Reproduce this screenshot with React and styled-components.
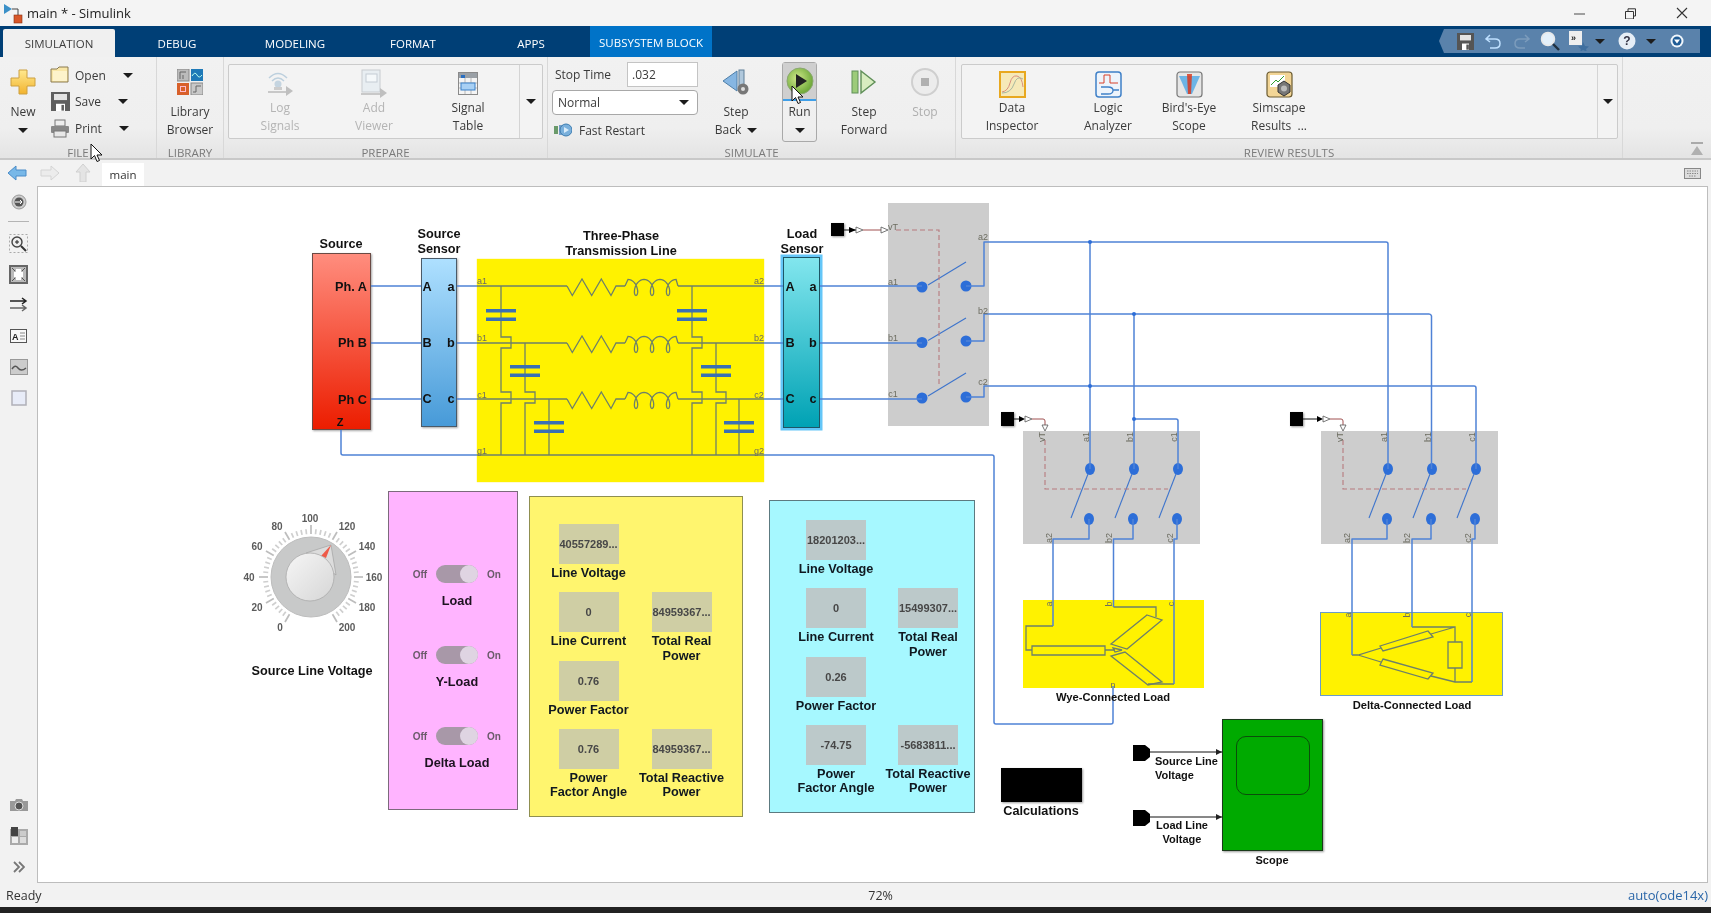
import React from "react";
import styled, { createGlobalStyle } from "styled-components";

const OX = 37;
const OY = 186;
const UI = `"Open Sans", "Noto Sans", sans-serif`;
const LAB = `"Liberation Sans", Arial, sans-serif`;

const Global = createGlobalStyle`
  html, body { margin: 0; padding: 0; background: #f2f2f2; overflow: hidden; }
  * { box-sizing: border-box; }
`;

const Root = styled.div`
  position: relative; width: 1711px; height: 913px; display: flex; flex-direction: column;
  font-family: ${UI}; font-size: 12px; color: #3a3a3a; filter: blur(0.35px); overflow: hidden;
`;

/* ---------- title bar ---------- */
const TitleBar = styled.div`
  height: 26px; display: flex; align-items: center; padding-left: 3px; background: #f4f4f4;
`;
const TitleText = styled.span`margin-left: 4px; font-size: 13px; color: #222; line-height: 1;`;
const WinControls = styled.div`margin-left: auto; display: flex; align-items: center; padding-right: 23px; gap: 40px;`;

/* ---------- tabs ---------- */
const TabBar = styled.div`
  height: 31px; background: #003f76; display: flex; padding-left: 3px; align-items: flex-end;
`;
const Tab = styled.div`
  width: ${p => p.$w || 118}px; height: ${p => (p.$context ? 31 : 28)}px; margin-right: ${p => p.$mr || 0}px;
  display: flex; align-items: center; justify-content: center; font-size: 11.5px;
  padding-top: ${p => (p.$context ? 1 : 0)}px;
  color: ${p => (p.$active ? "#3c3c3c" : "#fff")};
  background: ${p => (p.$active ? "#f0f0f0" : p.$context ? "#0073c8" : "transparent")};
  border-radius: ${p => (p.$active ? "2px 2px 0 0" : "0")};
`;
const QuickAccess = styled.div`
  margin-left: auto; margin-right: 11px; margin-bottom: 4px; width: 261px; height: 24px; background: #5a82ab;
  clip-path: polygon(0 50%, 5px 0, 100% 0, 100% 100%, 5px 100%);
  display: flex; align-items: center; padding-left: 17px;
`;
const QuickSlot = styled.span`
  width: ${p => p.$w || 29}px; display: flex; align-items: center; justify-content: center;
`;

/* ---------- ribbon ---------- */
const Ribbon = styled.div`
  height: 103px; display: flex; border-bottom: 2px solid #c8c8c8;
  background: linear-gradient(#f1f1f1 0%, #efefef 70%, #e4e4e4 100%);
`;
const Section = styled.div`
  width: ${p => p.$w}px; display: flex; flex-direction: column; border-right: 1px solid #d8d8d8;
`;
const SectionBody = styled.div`
  height: 90px; display: flex; padding-left: ${p => p.$pl || 0}px; align-items: flex-start;
`;
const SectionLabel = styled.div`
  height: 11px; line-height: 11px; text-align: center; font-size: 11.5px; color: #7a7a7a;
`;
const Tool = styled.div`
  width: ${p => p.$w}px; padding-top: 10px; display: flex; flex-direction: column; align-items: center;
  line-height: 18px; color: ${p => (p.$off ? "#aeaeae" : "#3a3a3a")}; text-align: center; flex: none;
`;
const ToolIcon = styled.div`
  height: 30px; margin-bottom: 6px; display: flex; align-items: center; justify-content: center;
`;
const Gallery = styled.div`
  margin: 7px 0 0 ${p => p.$ml}px; width: ${p => p.$w}px; height: 75px; display: flex;
  border: 1px solid #cbcbcb; border-radius: 2px; background: #f3f3f3;
`;
const GalleryItems = styled.div`flex: 1; display: flex; padding-left: ${p => p.$pl || 0}px;`;
const GalleryMore = styled.div`
  width: ${p => p.$w}px; border-left: 1px solid #d4d4d4; display: flex; align-items: center; justify-content: center;
`;
const GalleryTool = styled.div`
  width: ${p => p.$w}px; padding-top: 4px; display: flex; flex-direction: column; align-items: center;
  line-height: 18px; text-align: center; color: ${p => (p.$off ? "#b4b4b4" : "#3a3a3a")};
`;
const GalleryIcon = styled.div`height: 30px; display: flex; align-items: center; justify-content: center;`;
const Caret = styled.span`
  display: inline-block; width: 0; height: 0; border-left: 5px solid transparent; border-right: 5px solid transparent;
  border-top: 5px solid #1c1c1c; margin-left: ${p => p.$ml || 0}px; flex: none;
`;
const CaretLine = styled.div`height: 18px; display: flex; align-items: center; justify-content: center;`;
const FileRows = styled.div`padding: 5px 0 0 10px; display: flex; flex-direction: column;`;
const FileRow = styled.div`height: 26.5px; display: flex; align-items: center;`;
const FileIcon = styled.span`width: 20px; margin-right: 5px; display: flex; justify-content: center;`;
const SimColumn = styled.div`
  width: 146px; padding-top: 5px; display: flex; flex-direction: column; gap: 3px; flex: none;
`;
const StopRow = styled.div`display: flex; align-items: center; justify-content: space-between; height: 25px; padding-left: 3px;`;
const StopInput = styled.div`
  width: 71px; height: 25px; background: #fff; border: 1px solid #c4c4c4; padding-left: 4px; line-height: 23px;
`;
const ModeSelect = styled.div`
  height: 25px; background: #fff; border: 1px solid #a8a8a8; border-radius: 4px; padding: 0 8px 0 5px;
  display: flex; align-items: center; justify-content: space-between;
`;
const FastRow = styled.div`height: 24px; display: flex; align-items: center; gap: 7px; padding-left: 2px;`;
const RunBox = styled.div`
  width: 35px; height: 80px; margin: 5px 0 0 8px; border: 1px solid #a9a9a9; border-radius: 3px; flex: none;
  display: flex; flex-direction: column; align-items: center; line-height: 18px;
`;
const RunTop = styled.div`
  width: 100%; height: 38px; background: #cfcfcf; border-bottom: 2px solid #3f9fe8; flex: none; margin-bottom: 2px;
  display: flex; align-items: center; justify-content: center;
`;
const TailSection = styled.div`flex: 1; position: relative; display: flex; justify-content: flex-end; align-items: flex-end; padding: 0 7px 2px 0;`;

/* ---------- breadcrumb strip ---------- */
const Strip = styled.div`
  height: 26px; display: flex; align-items: flex-end; background: #f2f2f2; padding-left: 7px;
`;
const NavSlot = styled.span`width: 33px; height: 26px; display: flex; align-items: center; justify-content: flex-start;`;
const ModelTab = styled.div`
  width: 42px; height: 23px; background: #fff; margin-left: -4px; font-size: 11.5px; line-height: 24px; text-align: center; color: #333;
`;
const StripEnd = styled.span`margin-left: auto; height: 26px; display: flex; align-items: center; padding-right: 10px;`;

/* ---------- main ---------- */
const Main = styled.div`height: 697px; display: flex;`;
const LeftBar = styled.div`
  width: 37px; display: flex; flex-direction: column; align-items: center; padding: 5px 0 5px; background: #f2f2f2; flex: none;
`;
const LeftBtn = styled.div`
  width: 22px; height: 22px; display: flex; align-items: center; justify-content: center; margin-bottom: ${p => p.$mb ?? 9}px;
  &:last-child { margin-bottom: 0; }
`;
const LeftSep = styled.div`width: 21px; height: 1px; background: #b4b4b4; margin: -1px 0 10px;`;
const LeftSpacer = styled.div`flex: 1;`;
const Canvas = styled.div`
  position: relative; width: 1671px; height: 697px; background: #fff; box-shadow: inset 0 0 0 1px #bdbdbd; overflow: hidden;
`;

const Node = styled.div`
  position: absolute; left: ${p => p.$x - OX}px; top: ${p => p.$y - OY}px; width: ${p => p.$w}px; height: ${p => p.$h}px;
`;
const SourceBlock = styled(Node)`
  background: linear-gradient(#ff8d7e, #ec1d00); border: 1px solid #6a4a44; box-shadow: 1px 1px 2px rgba(0,0,0,.35);
`;
const SensorBlock = styled(Node)`
  background: linear-gradient(#aee0ff, #479ad8); border: 1px solid #4a5a68; box-shadow: 1px 1px 2px rgba(0,0,0,.35);
`;
const LoadSensorBlock = styled(Node)`
  background: linear-gradient(#82e6ee, #00a2b4); border: 1.5px solid #1d5666; box-shadow: 0 0 0 2.5px #64c6f8;
`;
const YellowBlock = styled(Node)`
  background: #fff200; box-shadow: ${p => (p.$soft ? "0 0 1px #ffe000" : "none")};
  border: ${p => (p.$line ? "1.5px solid #6a9cc8" : "none")};
`;
const SwitchBlock = styled(Node)`background: #cdcdcd;`;
const PanelPink = styled(Node)`
  background: #ffb4ff; border: 1px solid #7c6a7c; display: flex; flex-direction: column; align-items: center;
  padding: 73px 0 0 8px; gap: 37px;
`;
const ToggleGroup = styled.div`display: flex; flex-direction: column; align-items: center;`;
const ToggleRow = styled.div`display: flex; align-items: center; gap: 8px; height: 18px;`;
const ToggleSide = styled.span`width: 16px; text-align: center; font: bold 10px ${LAB}; color: #6a5a6a;`;
const ToggleTrack = styled.span`
  position: relative; width: 42px; height: 18px; border-radius: 9px; background: #a898a8; display: block;
`;
const ToggleKnob = styled.span`
  position: absolute; right: 0; top: 0; width: 18px; height: 18px; border-radius: 50%; background: #dfd4e2;
`;
const ToggleLabel = styled.div`
  margin-top: 10px; font: bold 12.7px/16px ${LAB}; color: #1d1320; white-space: nowrap;
`;
const ReadoutPanel = styled(Node)`
  background: ${p => p.$bg}; border: 1px solid ${p => p.$edge};
  display: grid; grid-template-columns: ${p => p.$col}px ${p => p.$col}px; grid-auto-rows: 68.3px;
  padding: ${p => p.$pt}px 0 0 ${p => p.$pl}px;
`;
const ReadoutCell = styled.div`display: flex; flex-direction: column; align-items: center;`;
const ReadoutValue = styled.div`
  width: 60px; height: 40px; flex: none; background: ${p => p.$bg}; display: flex; align-items: center; justify-content: center;
  font: bold 11px ${LAB}; color: #474747; white-space: nowrap;
`;
const ReadoutName = styled.div`
  margin-top: 2px; font: bold 12.7px/14.5px ${LAB}; color: #101820; text-align: center; white-space: pre;
`;
const BlackBox = styled(Node)`background: #000; box-shadow: 1px 1px 2px rgba(0,0,0,.4);`;
const ScopeBlock = styled(Node)`
  background: #00aa00; border: 1px solid #1a3a1a; box-shadow: 1px 1px 2px rgba(0,0,0,.4);
`;
const ScopeScreen = styled.div`
  margin: 16px 0 0 13px; width: 74px; height: 59px; border: 1.5px solid #0b4d0b; border-radius: 10px;
`;
const Caption = styled.div`
  position: absolute; left: ${p => p.$x - OX}px; top: ${p => p.$y - OY}px;
  transform: translate(${p => (p.$align === "left" ? "0" : p.$align === "right" ? "-100%" : "-50%")}, -50%);
  font: bold ${p => p.$s || 12.7}px/${p => p.$lh || 14.5}px ${LAB}; color: ${p => p.$c || "#111"}; text-align: ${p => p.$align || "center"}; white-space: pre;
`;
const PortText = styled.div`
  position: absolute; left: ${p => p.$x - OX}px; top: ${p => p.$y - OY}px;
  transform: translate(-50%, -50%) rotate(${p => (p.$v ? -90 : 0)}deg);
  font: 9px/10px ${LAB}; color: #6c6c60; white-space: nowrap;
`;
const Overlay = styled.svg`position: absolute; left: 0; top: 0; width: 1671px; height: 697px; pointer-events: none;`;
const Dial = styled.svg`position: absolute; left: ${240 - OX}px; top: ${510 - OY}px; width: 145px; height: 130px;`;
const DialText = styled.text`font: bold 10px ${LAB}; fill: #5c5c5c; text-anchor: middle; dominant-baseline: middle;`;
const BlueWire = styled.path`fill: none; stroke: #4f82d6; stroke-width: 1.5; stroke-linejoin: round;`;
const GrayLine = styled.path`fill: none; stroke: #6e8068; stroke-width: 1.3;`;
const SwitchArm = styled.path`fill: none; stroke: #3d74cc; stroke-width: 1.1;`;
const DashLine = styled.path`fill: none; stroke: #b77a7e; stroke-width: 1.1; stroke-dasharray: 5 3;`;
const RedLine = styled.path`fill: none; stroke: #a05050; stroke-width: 1;`;
const BlackLine = styled.path`fill: none; stroke: #111; stroke-width: 1;`;
const Contact = styled.ellipse`fill: #2d6ed8;`;
const CapPlate = styled.rect`fill: #3a70b4;`;
const Hollow = styled.path`fill: #fff; stroke: #555; stroke-width: .8;`;

/* ---------- status ---------- */
const Status = styled.div`
  height: 24px; display: grid; grid-template-columns: 1fr 1fr 1fr; align-items: center; padding: 0 3px 0 6px; font-size: 12.5px; color: #333; background: #f2f2f2;
`;
const StatusMid = styled.span`text-align: left; padding-left: 295px;`;
const StatusEnd = styled.span`text-align: right; color: #2a66a8; font-size: 13px;`;
const BottomEdge = styled.div`height: 6px; background: #222;`;
const Cursor = styled.svg`position: absolute; left: ${p => p.$x}px; top: ${p => p.$y}px; z-index: 5;`;

/* ---------- icons ---------- */
const S = ({ w, h = w, children }) => <svg width={w} height={h} viewBox={`0 0 ${w} ${h}`}>{children}</svg>;
const AppIcon = () => (
  <S w={20} h={22}>
    <path d="M1 2 L9 7 L1 12Z" fill="#3a90c8" />
    <path d="M9 7 H15 V13" fill="none" stroke="#444" />
    <rect x="11" y="13" width="8" height="8" fill="#d8582a" stroke="#8a3010" strokeWidth=".6" />
  </S>
);
const PlusIcon = () => (
  <S w={26}>
    <defs><linearGradient id="pl" x1="0" y1="0" x2="0" y2="1"><stop offset="0" stopColor="#ffe98f" /><stop offset="1" stopColor="#f2b32e" /></linearGradient></defs>
    <path d="M9 1H17V9H25V17H17V25H9V17H1V9H9Z" fill="url(#pl)" stroke="#cda040" />
  </S>
);
const FolderIcon = () => (
  <S w={20} h={18}><path d="M1 3H7L9 1H18V16H1Z" fill="#f9e7a8" stroke="#8a7a50" /><path d="M3 5H17V15H3Z" fill="#fdf3cb" /></S>
);
const FloppyIcon = ({ s = 19, c = "#5f5f5f" }) => (
  <S w={s}><path d={`M0 0H${s}V${s}H0Z`} fill={c} /><rect x="3" y="2" width={s - 6} height={s * .32} fill="#e4e4e4" /><rect x="5" y={s * .62} width={s - 10} height={s * .38} fill="#fff" /><rect x={s * .55} y={s * .68} width="2.5" height={s * .3} fill={c} /></S>
);
const PrintIcon = () => (
  <S w={20} h={19}><rect x="5" y="1" width="10" height="6" fill="#eee" stroke="#777" /><rect x="1" y="7" width="18" height="7" rx="1" fill="#888" /><rect x="4" y="12" width="12" height="6" fill="#e8e8e8" stroke="#777" /></S>
);
const LibraryIcon = () => (
  <S w={26}>
    <rect x="0" y="0" width="12" height="12" fill="#bbb" stroke="#888" /><path d="M3 10V3H9M6 10V6" stroke="#666" fill="none" />
    <rect x="14" y="0" width="12" height="12" fill="#1f7ab8" /><path d="M15 7Q18 2 20 6T25 6" stroke="#bfe" fill="none" />
    <rect x="0" y="14" width="12" height="12" fill="#d8602a" /><rect x="3.5" y="17.5" width="5" height="5" fill="none" stroke="#fbc" />
    <rect x="14" y="14" width="12" height="12" fill="#c8c8c8" stroke="#888" /><path d="M16 23H19V17H24" stroke="#666" fill="none" />
  </S>
);
const LogIcon = () => (
  <S w={30} h={30}>
    <g fill="none" stroke="#bdd0de" strokeWidth="1.5"><path d="M4 9Q13 0 22 9" /><path d="M7 12Q13 6 19 12" /></g>
    <circle cx="13" cy="15" r="3.5" fill="#c4d4e0" /><path d="M3 23H24" stroke="#c8c8c8" strokeWidth="2" />
    <path d="M21 17V27L28 22Z" fill="#bfbfbf" /><rect x="9" y="18" width="8" height="3" fill="#ccc" />
  </S>
);
const ViewerIcon = () => (
  <S w={30} h={30}>
    <rect x="3" y="1" width="18" height="22" fill="#e8eef2" stroke="#c8ccd0" /><rect x="7" y="5" width="11" height="8" fill="#f4f8fa" stroke="#c4ccd4" />
    <path d="M2 25H24" stroke="#c8c8c8" strokeWidth="2" /><path d="M21 19V29L28 24Z" fill="#bfbfbf" />
  </S>
);
const TableIcon = () => (
  <S w={20} h={24}>
    <rect x=".5" y=".5" width="19" height="22" fill="#f4f4f4" stroke="#8a8a8a" /><rect x="1" y="1" width="18" height="5" fill="#9aa0a6" />
    <path d="M1 11H19M1 16H19M7 6V22M13 6V22" stroke="#b8b8b8" /><rect x="3" y="11" width="14" height="7" fill="#a8d0f4" stroke="#3a80c8" />
    <rect x="3" y="3" width="4" height="3" fill="#2a6ec0" />
  </S>
);
const FastIcon = () => (
  <S w={18} h={16}>
    <rect x="0" y="4" width="4" height="8" fill="#6a9a6a" /><rect x="5" y="3" width="4" height="10" fill="#7aa0c8" />
    <circle cx="12" cy="8" r="6" fill="#7ab0dc" stroke="#3c7cb0" /><path d="M10 5L15 8L10 11Z" fill="#d8ecfa" />
  </S>
);
const StepBackIcon = () => (
  <S w={28}>
    <path d="M15 3V23L1 13Z" fill="#86b6e2" stroke="#4f7fa8" />
    <rect x="17" y="2" width="5" height="21" fill="#b0c8dc" stroke="#5f7f98" />
    <circle cx="21" cy="21" r="5.5" fill="#777" /><circle cx="21" cy="21" r="2" fill="#ddd" />
  </S>
);
const RunIcon = () => (
  <S w={28}>
    <defs><radialGradient id="rn" cx=".4" cy=".4" r=".7"><stop offset="0" stopColor="#cfe88a" /><stop offset="1" stopColor="#5f9e2c" /></radialGradient></defs>
    <circle cx="14" cy="14" r="13" fill="url(#rn)" stroke="#8aa870" /><path d="M10 7L21 14L10 21Z" fill="#222" />
  </S>
);
const StepForwardIcon = () => (
  <S w={26}>
    <rect x="1" y="2" width="6" height="22" fill="#9ccb7a" stroke="#5f8f58" />
    <path d="M10 2L24 13L10 24Z" fill="#d8edc0" stroke="#5f8f58" strokeWidth="1.4" />
  </S>
);
const StopIcon = () => (
  <S w={28}><circle cx="14" cy="14" r="13" fill="#ececec" stroke="#cfcfcf" strokeWidth="2" /><rect x="10" y="10" width="8" height="8" fill="#b0b0b0" /></S>
);
const InspectorIcon = () => (
  <S w={27}><rect x="1" y="1" width="25" height="25" fill="#f6e9b8" stroke="#e8a820" strokeWidth="2" /><path d="M3 21Q9 20 11 12T18 5T24 16" stroke="#d89080" fill="none" /><path d="M3 22Q12 22 15 13T24 8" stroke="#a8b8a0" fill="none" /></S>
);
const AnalyzerIcon = () => (
  <S w={27}><rect x="1" y="1" width="25" height="25" rx="3" fill="#eef4fb" stroke="#3f80c8" strokeWidth="1.5" /><path d="M4 12H9V4H15V12H23" stroke="#d8402a" fill="none" /><path d="M6 16H13Q18 16 18 19.5T13 23H6M18 19H24" stroke="#3f80c8" strokeWidth="1.3" fill="none" /></S>
);
const BirdIcon = () => (
  <S w={27}><rect x="1" y="1" width="25" height="25" rx="3" fill="#e6e6e6" stroke="#777" strokeWidth="1.2" /><path d="M3 5H24L16 23H11Z" fill="#6cb4e6" /><path d="M11 3H16L15 23H12Z" fill="#d83a20" opacity=".85" /></S>
);
const SimscapeIcon = () => (
  <S w={27}><rect x="1" y="1" width="25" height="25" rx="3" fill="#f2d596" stroke="#6a5a30" strokeWidth="1.2" /><rect x="4" y="4" width="15" height="12" fill="#fff" /><path d="M5 14L10 9L12 11L18 5" stroke="#30a030" fill="none" /><path d="M18 10L24 14V21L18 25L12 21V14Z" fill="#777" stroke="#333" /><circle cx="18" cy="17.500" r="3" fill="#bbb" /></S>
);
const UndoIcon = () => (
  <S w={18} h={18}><path d="M6 3L2 7L6 10M2 7H11Q16 7 16 11.500T11 16H6" fill="none" stroke="#bfe0ff" strokeWidth="1.5" /></S>
);
const RedoIcon = () => (
  <S w={18} h={18}><path d="M12 3L16 7L12 10M16 7H7Q2 7 2 11.500T7 16H12" fill="none" stroke="#7c9cbc" strokeWidth="1.5" /></S>
);
const SearchIcon = () => (
  <S w={20}><circle cx="8" cy="8" r="6.500" fill="#e4f0fa" stroke="#e8e8e8" strokeWidth="1.500" /><path d="M13 13L19 19" stroke="#203040" strokeWidth="2.400" /></S>
);
const FavIcon = () => (
  <S w={20}><rect x="0" y="0" width="13" height="14" fill="#eee" /><text x="2" y="10" fontSize="9" fontWeight="bold" fontFamily="Liberation Sans" fill="#222">»</text><path d="M14 11L16 15L20 15.500L17 18L18 21L14 19L11 21L12 18L9 15.500L13 15Z" fill="#3f6f9f" /></S>
);
const HelpIcon = () => (
  <S w={18}><circle cx="9" cy="9" r="8.500" fill="#e6eef6" /><text x="9" y="13" fontSize="12" fontWeight="bold" textAnchor="middle" fontFamily="Liberation Sans" fill="#334">?</text></S>
);
const MoreCircleIcon = () => (
  <S w={14}><circle cx="7" cy="7" r="6.500" fill="#f0f6fb" /><circle cx="7" cy="7" r="4.500" fill="#1f5c96" /><path d="M4 5.500H10L7 9.500Z" fill="#fff" /></S>
);
const ArrowL = ({ c = "#78b8e8", e = "#4a8cc8", flip, up }) => (
  <S w={20} h={18}>
    <g transform={flip ? "translate(20,0) scale(-1,1)" : up ? "rotate(90 10 9)" : undefined}>
      <path d="M1 9L9 2V6H19V12H9V16Z" fill={c} stroke={e} />
    </g>
  </S>
);
const Collapse = () => (
  <S w={14} h={14}><rect x="1" y="0" width="12" height="2" fill="#aaa" /><path d="M1 13L7 4L13 13Z" fill="#b0b0b0" /></S>
);
const KeyboardIcon = () => (
  <S w={17} h={11}><rect x=".5" y=".5" width="16" height="10" fill="#ddd" stroke="#888" /><path d="M3 3H14M3 5.500H14M5 8H12" stroke="#888" strokeDasharray="1.500 1" /></S>
);
const Tb = {
  nav: <S w={16}><circle cx="8" cy="8" r="7" fill="#ccc" stroke="#999" /><circle cx="8" cy="8" r="4.500" fill="#555" /><path d="M4 8H11M9 6L11 8L9 10" stroke="#fff" fill="none" /></S>,
  zoom: <S w={19}><rect x=".5" y=".5" width="18" height="18" fill="none" stroke="#aaa" strokeDasharray="2 2" /><circle cx="8" cy="8" r="5" fill="#eee" stroke="#444" strokeWidth="1.400" /><path d="M6 8H10M8 6V10" stroke="#222" /><path d="M12 12L17 17" stroke="#333" strokeWidth="2" /></S>,
  fit: <S w={19}><rect width="19" height="19" fill="#666" /><rect x="2" y="2" width="15" height="15" fill="#bbb" /><path d="M5 9.500H14M9.500 4V15" stroke="#fff" strokeWidth="5" /><path d="M3 3L6 6M16 3L13 6M3 16L6 13M16 16L13 13" stroke="#555" /></S>,
  arrows: <S w={18}><path d="M0 5H15M12 2L16 5L12 8" stroke="#222" strokeWidth="1.500" fill="none" /><path d="M0 12H15M12 9L16 12L12 15" stroke="#666" strokeWidth="1.500" fill="none" /></S>,
  text: <S w={17} h={14}><rect x=".5" y=".5" width="16" height="13" fill="#f8f8f8" stroke="#555" /><text x="2" y="10.500" fontSize="9" fontWeight="bold" fontFamily="Liberation Sans" fill="#222">A</text><path d="M10 4H15M10 7H15M10 10H15" stroke="#888" /></S>,
  image: <S w={18} h={16}><rect x=".5" y=".5" width="17" height="15" fill="#ccc" stroke="#999" /><path d="M2 10Q5 5 8 9T16 9" stroke="#555" strokeWidth="1.500" fill="none" /></S>,
  rect: <S w={16}><rect x="1" y="1" width="14" height="14" fill="#e8ecf8" stroke="#b0b0b8" strokeWidth="1.500" /></S>,
  camera: <S w={18} h={14}><path d="M0 3H5L6 1H12L13 3H18V13H0Z" fill="#999" /><circle cx="9" cy="8" r="4" fill="#555" stroke="#ddd" /></S>,
  grid: <S w={18}><rect y="2" width="18" height="16" fill="#aaa" /><rect x="1" y="0" width="7" height="9" fill="#444" /><rect x="2" y="10" width="6" height="6" fill="#eee" /><rect x="10" y="10" width="6" height="6" fill="#ddd" /><rect x="10" y="4" width="6" height="5" fill="#ccc" /></S>,
  more: <S w={12}><path d="M1 1L6 6L1 11M6 1L11 6L6 11" stroke="#777" strokeWidth="1.800" fill="none" /></S>,
};
const WinMin = () => <S w={11}><path d="M0 6H11" stroke="#666" strokeWidth="1.200" /></S>;
const WinMax = () => <S w={11}><path d="M.5 3.500H8.500V11H.5ZM3 3V.8H10.500V8H9" fill="none" stroke="#333" /></S>;
const WinClose = () => <S w={12}><path d="M1 1L11 11M11 1L1 11" stroke="#333" strokeWidth="1.100" /></S>;
const PointerIcon = ({ x, y }) => (
  <Cursor $x={x} $y={y} width="14" height="20" viewBox="0 0 14 20">
    <path d="M1 1V16L4.500 12.500L7 18.500L9.500 17.500L7 12H12Z" fill="#fff" stroke="#111" strokeWidth="1" />
  </Cursor>
);

/* ---------- diagram drawing ---------- */
const resistor = (y) => `M567 ${y}L572.300 ${y + 9.5}L582 ${y - 7}L591.700 ${y + 9.5}L601.300 ${y - 7}L611 ${y + 9.5}L616 ${y}H625`;
const inductor = (y) => {
  const pts = [];
  for (let i = 0; i <= 90; i++) {
    const t = Math.PI + (i / 90) * 6 * Math.PI;
    pts.push(`${(628 + (t - Math.PI) * 2.55 - 5 * Math.sin(t)).toFixed(1)} ${(y + 1.5 + 8 * Math.cos(t)).toFixed(1)}`);
  }
  return `M625 ${y}L` + pts.join("L") + `L678 ${y}`;
};
const Capacitor = ({ x, y }) => (
  <>
    <CapPlate x={x - 15} y={y} width="30" height="3.500" />
    <CapPlate x={x - 15} y={y + 8.5} width="30" height="3.500" />
  </>
);
const LINE_Y = [286, 343, 399];
const capHop = (x, y) => `V${y}H${x + 10}V${y + 11}H${x}`;
const TransmissionInner = () => (
  <>
    {LINE_Y.map((y) => (
      <GrayLine key={y} d={`M477 ${y}H567M678 ${y}H764`} />
    ))}
    {LINE_Y.map((y) => <GrayLine key={`r${y}`} d={resistor(y)} />)}
    {LINE_Y.map((y) => <GrayLine key={`l${y}`} d={inductor(y)} />)}
    <GrayLine d="M477 455H764" />
    {[0, 191].map((o) => (
      <React.Fragment key={o}>
        <GrayLine d={`M${501 + o} 286${capHop(501 + o, 337)}${capHop(501 + o, 392)}V455`} />
        <GrayLine d={`M${525 + o} 343${capHop(525 + o, 392)}V455`} />
        <GrayLine d={`M${549 + (o ? 190 : 0)} 399V455`} />
        <Capacitor x={501 + o} y={309} />
        <Capacitor x={525 + o} y={365} />
        <Capacitor x={549 + (o ? 190 : 0)} y={421} />
      </React.Fragment>
    ))}
  </>
);
const TopSwitch = () => (
  <>
    {[[287, 286, 262], [342.5, 341, 318], [398, 397, 373]].map(([a, b, tip]) => (
      <React.Fragment key={a}>
        <Contact cx="922" cy={a} rx="5.500" ry="5.500" />
        <Contact cx="966" cy={b} rx="5.500" ry="5.500" />
        <SwitchArm d={`M928 ${a - 2}L966 ${tip}`} />
      </React.Fragment>
    ))}
    <DashLine d="M896 230H939V385" />
    <BlackLine d="M844 230H856" />
    <path d="M849 227L856 230L849 233Z" fill="#000" />
    <Hollow d="M856 227L863 230L856 233Z" />
    <RedLine d="M863 230H881" />
    <Hollow d="M881 227L888 230L881 233Z" />
  </>
);
const LowerSwitch = ({ o, from }) => (
  <>
    {[0, 44, 88].map((d) => (
      <React.Fragment key={d}>
        <Contact cx={1090 + o + d} cy="469" rx="5" ry="6" />
        <Contact cx={1089 + o + d} cy="519" rx="5" ry="6" />
        <SwitchArm d={`M${1088 + o + d} 474L${1071 + o + d} 518`} />
      </React.Fragment>
    ))}
    <DashLine d={`M${1045 + o} 440V489H${1168 + o}`} />
    <BlackLine d={`M${from} 419H${1020 + o}`} />
    <path d={`M${1019 + o} 416L${1025 + o} 419L${1019 + o} 422Z`} fill="#000" />
    <Hollow d={`M${1025 + o} 416L${1032 + o} 419L${1025 + o} 422Z`} />
    <RedLine d={`M${1032 + o} 419H${1043 + o}Q${1045 + o} 419 ${1045 + o} 421V426`} />
    <Hollow d={`M${1042 + o} 425H${1048 + o}L${1045 + o} 431Z`} />
  </>
);
const WyeInner = () => (
  <>
    <GrayLine d="M1053 626H1026V650H1032M1105 650H1115" />
    <GrayLine d="M1032 646H1105V655H1032Z" />
    <GrayLine d="M1113.500 607H1156V617" />
    <GrayLine d="M1147 615L1162 620L1127 649L1111 644Z" />
    <GrayLine d="M1125 652L1162 682L1148 685L1111 656Z" />
    <GrayLine d="M1174 684H1148M1113 648L1122 650L1115 652Z" />
  </>
);
const DeltaInner = () => (
  <>
    <GrayLine d="M1352 655H1358L1381 648M1431 634L1455 627M1412 627H1455V642M1455 668V682H1472M1358 655L1381 662M1431 676L1455 682" />
    <GrayLine d="M1448 642H1462V668H1448Z" />
    <GrayLine d="M1380 646L1428 631L1433 637L1383 651Z" />
    <GrayLine d="M1383 659L1433 673L1428 679L1380 665Z" />
  </>
);
const Wires = () => (
  <>
    {LINE_Y.map((y) => <BlueWire key={y} d={`M371 ${y}H421M457 ${y}H477M764 ${y}H783M820 ${y}H922`} />)}
    <BlueWire d="M341 430V453Q341 455 343 455H477M764 455H992Q994 455 994 457V722Q994 724 996 724H1111Q1113 724 1113 722V686" />
    <BlueWire d="M966 286H984V242H1386Q1388 242 1388 244V469" />
    <BlueWire d="M966 341H984V314H1429Q1431 314 1431.500 316V469" />
    <BlueWire d="M966 397H984V386H1474Q1476 386 1476 388V469" />
    <BlueWire d="M1090 242V469M1134 314V469M1134 419H1176Q1178 419 1178 421V469" />
    <Contact cx="1090" cy="242" rx="2" ry="2" />
    <Contact cx="1134" cy="314" rx="2" ry="2" />
    <Contact cx="1090" cy="386" rx="2" ry="2" />
    <Contact cx="1134" cy="419" rx="2" ry="2" />
    <BlueWire d="M1089 519V539H1053V626M1133 519V539H1113.500V607M1177 519V539H1174V684" />
    <BlueWire d="M1387 519V539H1352V655M1431 519V539H1412V627M1475 519V539H1472V682" />
    <BlackLine d="M1150 752H1222M1150 817H1222" stroke="#555" />
    <path d="M1216 749L1222 752L1216 755ZM1216 814L1222 817L1216 820Z" fill="#222" />
    <path d="M1133 745H1145L1150 749V757L1145 761H1133ZM1133 810H1145L1150 814V822L1145 826H1133Z" fill="#000" />
  </>
);
const KnobDial = () => {
  const cx = 311, cy = 577;
  const ticks = [];
  for (let i = 0; i <= 50; i++) {
    const a = ((-150 + i * 6) * Math.PI) / 180;
    const major = i % 5 === 0;
    const r1 = 43, r2 = major ? 52 : 48;
    ticks.push(
      <line key={i} x1={cx + r1 * Math.sin(a)} y1={cy - r1 * Math.cos(a)} x2={cx + r2 * Math.sin(a)} y2={cy - r2 * Math.cos(a)}
        stroke={major ? "#bdbdbd" : "#cfcfcf"} strokeWidth="1.700" />
    );
  }
  const nums = [[100, 310, 519], [80, 277, 527], [120, 347, 527], [60, 257, 547], [140, 367, 547], [40, 249, 578], [160, 374, 578], [20, 257, 608], [180, 367, 608], [0, 280, 628], [200, 347, 628]];
  return (
    <Dial viewBox="240 510 145 130">
      <defs>
        <linearGradient id="kn" x1="0" y1="0" x2="1" y2="1"><stop offset="0" stopColor="#f6f6f6" /><stop offset="1" stopColor="#d6d6d6" /></linearGradient>
      </defs>
      {ticks}
      <circle cx={cx} cy={cy} r="40" fill="#c8c9c9" stroke="#bdbdbd" />
      <path d="M306 553L331 545L336 575Z" fill="#dcdcdc" stroke="#9a9a9a" strokeWidth=".6" />
      <path d="M331 545L321 556L326 558Z" fill="#ee5a48" />
      <circle cx="310" cy="577" r="24" fill="url(#kn)" stroke="#aaa" strokeWidth=".8" />
      {nums.map(([n, x, y]) => <DialText key={n} x={x} y={y}>{n}</DialText>)}
    </Dial>
  );
};

const yellowReadouts = [
  ["40557289...", "Line Voltage"], null,
  ["0", "Line Current"], ["84959367...", "Total Real\nPower"],
  ["0.76", "Power Factor"], null,
  ["0.76", "Power\nFactor Angle"], ["84959367...", "Total Reactive\nPower"],
];
const cyanReadouts = [
  ["18201203...", "Line Voltage"], null,
  ["0", "Line Current"], ["15499307...", "Total Real\nPower"],
  ["0.26", "Power Factor"], null,
  ["-74.75", "Power\nFactor Angle"], ["-5683811...", "Total Reactive\nPower"],
];
const Readouts = ({ list, bg }) =>
  list.map((r, i) =>
    r ? (
      <ReadoutCell key={i}>
        <ReadoutValue $bg={bg}>{r[0]}</ReadoutValue>
        <ReadoutName>{r[1]}</ReadoutName>
      </ReadoutCell>
    ) : <span key={i} />
  );
const ports = [
  ["a1", 482, 281], ["b1", 482, 338], ["c1", 482, 395], ["g1", 482, 451],
  ["a2", 759, 281], ["b2", 759, 338], ["c2", 759, 395], ["g2", 759, 451],
  ["vT", 893, 227], ["a1", 893, 282], ["b1", 893, 338], ["c1", 893, 394], ["a2", 983, 237], ["b2", 983, 311], ["c2", 983, 382],
];
const vports = [
  ["vT", 1042, 437], ["a1", 1086, 437], ["b1", 1130, 437], ["c1", 1174, 437], ["a2", 1049, 538], ["b2", 1109, 538], ["c2", 1170, 538],
  ["vT", 1340, 437], ["a1", 1384, 437], ["b1", 1428, 437], ["c1", 1472, 437], ["a2", 1347, 538], ["b2", 1407, 538], ["c2", 1468, 538],
  ["a", 1049, 604], ["b", 1109, 604], ["c", 1171, 604], ["a", 1348, 615], ["b", 1407, 615], ["c", 1468, 615],
];

export default function App() {
  return (
    <Root>
      <Global />
      <TitleBar>
        <AppIcon />
        <TitleText>main * - Simulink</TitleText>
        <WinControls><WinMin /><WinMax /><WinClose /></WinControls>
      </TitleBar>

      <TabBar>
        <Tab $active $w={112} $mr={3}>SIMULATION</Tab>
        <Tab>DEBUG</Tab>
        <Tab>MODELING</Tab>
        <Tab>FORMAT</Tab>
        <Tab>APPS</Tab>
        <Tab $context $w={122}>SUBSYSTEM BLOCK</Tab>
        <QuickAccess>
          <QuickSlot $w={18}><FloppyIcon s={17} c="#555" /></QuickSlot>
          <QuickSlot $w={38}><UndoIcon /></QuickSlot>
          <QuickSlot $w={20}><RedoIcon /></QuickSlot>
          <QuickSlot $w={36}><SearchIcon /></QuickSlot>
          <QuickSlot $w={22}><FavIcon /></QuickSlot>
          <QuickSlot $w={20}><Caret /></QuickSlot>
          <QuickSlot $w={34}><HelpIcon /></QuickSlot>
          <QuickSlot $w={14}><Caret /></QuickSlot>
          <QuickSlot $w={38}><MoreCircleIcon /></QuickSlot>
        </QuickAccess>
      </TabBar>

      <Ribbon>
        <Section $w={157}>
          <SectionBody $pl={6}>
            <Tool $w={34}>
              <ToolIcon><PlusIcon /></ToolIcon>
              New
              <CaretLine><Caret /></CaretLine>
            </Tool>
            <FileRows>
              <FileRow><FileIcon><FolderIcon /></FileIcon>Open<Caret $ml={17} /></FileRow>
              <FileRow><FileIcon><FloppyIcon /></FileIcon>Save<Caret $ml={17} /></FileRow>
              <FileRow><FileIcon><PrintIcon /></FileIcon>Print<Caret $ml={17} /></FileRow>
            </FileRows>
          </SectionBody>
          <SectionLabel>FILE</SectionLabel>
        </Section>
        <Section $w={67}>
          <SectionBody>
            <Tool $w={66}>
              <ToolIcon><LibraryIcon /></ToolIcon>
              Library<br />Browser
            </Tool>
          </SectionBody>
          <SectionLabel>LIBRARY</SectionLabel>
        </Section>
        <Section $w={324}>
          <SectionBody>
            <Gallery $ml={4} $w={315}>
              <GalleryItems $pl={4}>
                <GalleryTool $w={94} $off><GalleryIcon><LogIcon /></GalleryIcon>Log<br />Signals</GalleryTool>
                <GalleryTool $w={94} $off><GalleryIcon><ViewerIcon /></GalleryIcon>Add<br />Viewer</GalleryTool>
                <GalleryTool $w={94}><GalleryIcon><TableIcon /></GalleryIcon>Signal<br />Table</GalleryTool>
              </GalleryItems>
              <GalleryMore $w={23}><Caret /></GalleryMore>
            </Gallery>
          </SectionBody>
          <SectionLabel>PREPARE</SectionLabel>
        </Section>
        <Section $w={408}>
          <SectionBody $pl={4}>
            <SimColumn>
              <StopRow>Stop Time<StopInput>.032</StopInput></StopRow>
              <ModeSelect>Normal<Caret /></ModeSelect>
              <FastRow><FastIcon />Fast Restart</FastRow>
            </SimColumn>
            <Tool $w={76}>
              <ToolIcon><StepBackIcon /></ToolIcon>
              Step
              <CaretLine>Back<Caret $ml={6} /></CaretLine>
            </Tool>
            <RunBox>
              <RunTop><RunIcon /></RunTop>
              Run
              <CaretLine><Caret /></CaretLine>
            </RunBox>
            <Tool $w={94}>
              <ToolIcon><StepForwardIcon /></ToolIcon>
              Step<br />Forward
            </Tool>
            <Tool $w={28} $off>
              <ToolIcon><StopIcon /></ToolIcon>
              Stop
            </Tool>
          </SectionBody>
          <SectionLabel>SIMULATE</SectionLabel>
        </Section>
        <Section $w={667}>
          <SectionBody>
            <Gallery $ml={5} $w={657}>
              <GalleryItems>
                <GalleryTool $w={100}><GalleryIcon><InspectorIcon /></GalleryIcon>Data<br />Inspector</GalleryTool>
                <GalleryTool $w={92}><GalleryIcon><AnalyzerIcon /></GalleryIcon>Logic<br />Analyzer</GalleryTool>
                <GalleryTool $w={70}><GalleryIcon><BirdIcon /></GalleryIcon>Bird's-Eye<br />Scope</GalleryTool>
                <GalleryTool $w={110}><GalleryIcon><SimscapeIcon /></GalleryIcon>Simscape<br />Results &nbsp;...</GalleryTool>
              </GalleryItems>
              <GalleryMore $w={20}><Caret /></GalleryMore>
            </Gallery>
          </SectionBody>
          <SectionLabel>REVIEW RESULTS</SectionLabel>
        </Section>
        <TailSection><Collapse /></TailSection>
      </Ribbon>

      <Strip>
        <NavSlot><ArrowL /></NavSlot>
        <NavSlot><ArrowL c="#ececec" e="#d4d4d4" flip /></NavSlot>
        <NavSlot><ArrowL c="#e4e4e4" e="#d0d0d0" up /></NavSlot>
        <ModelTab>main</ModelTab>
        <StripEnd><KeyboardIcon /></StripEnd>
      </Strip>

      <Main>
        <LeftBar>
          <LeftBtn $mb={9}>{Tb.nav}</LeftBtn>
          <LeftSep />
          <LeftBtn>{Tb.zoom}</LeftBtn>
          <LeftBtn>{Tb.fit}</LeftBtn>
          <LeftBtn>{Tb.arrows}</LeftBtn>
          <LeftBtn>{Tb.text}</LeftBtn>
          <LeftBtn>{Tb.image}</LeftBtn>
          <LeftBtn>{Tb.rect}</LeftBtn>
          <LeftSpacer />
          <LeftBtn>{Tb.camera}</LeftBtn>
          <LeftBtn>{Tb.grid}</LeftBtn>
          <LeftBtn>{Tb.more}</LeftBtn>
        </LeftBar>
        <Canvas>
          <SourceBlock $x={312} $y={253} $w={59} $h={177} />
          <SensorBlock $x={421} $y={258} $w={36} $h={169} />
          <YellowBlock $x={477} $y={259} $w={287} $h={223} $soft />
          <LoadSensorBlock $x={783} $y={257} $w={37} $h={171} />
          <SwitchBlock $x={888} $y={203} $w={101} $h={223} />
          <SwitchBlock $x={1023} $y={431} $w={177} $h={113} />
          <SwitchBlock $x={1321} $y={431} $w={177} $h={113} />
          <YellowBlock $x={1023} $y={600} $w={181} $h={88} />
          <YellowBlock $x={1320} $y={612} $w={183} $h={84} $line />
          <BlackBox $x={831} $y={223} $w={13} $h={13} />
          <BlackBox $x={1001} $y={412} $w={13} $h={14} />
          <BlackBox $x={1290} $y={412} $w={13} $h={14} />
          <BlackBox $x={1001} $y={768} $w={81} $h={34} />
          <ScopeBlock $x={1222} $y={719} $w={101} $h={132}><ScopeScreen /></ScopeBlock>

          <KnobDial />

          <PanelPink $x={388} $y={491} $w={130} $h={319}>
            {["Load", "Y-Load", "Delta Load"].map((name) => (
              <ToggleGroup key={name}>
                <ToggleRow>
                  <ToggleSide>Off</ToggleSide>
                  <ToggleTrack><ToggleKnob /></ToggleTrack>
                  <ToggleSide>On</ToggleSide>
                </ToggleRow>
                <ToggleLabel>{name}</ToggleLabel>
              </ToggleGroup>
            ))}
          </PanelPink>
          <ReadoutPanel $x={529} $y={496} $w={214} $h={321} $bg="#fff56e" $edge="#8f8f50" $col={93} $pt={27} $pl={12}>
            <Readouts list={yellowReadouts} bg="#cfcea4" />
          </ReadoutPanel>
          <ReadoutPanel $x={769} $y={500} $w={206} $h={313} $bg="#a6f8ff" $edge="#5c7a80" $col={92} $pt={19} $pl={20}>
            <Readouts list={cyanReadouts} bg="#bcc9ca" />
          </ReadoutPanel>

          <Overlay viewBox={`${OX} ${OY} 1671 697`}>
            <TransmissionInner />
            <TopSwitch />
            <LowerSwitch o={0} from={1014} />
            <LowerSwitch o={298} from={1303} />
            <WyeInner />
            <DeltaInner />
            <Wires />
          </Overlay>

          <Caption $x={341} $y={244}>Source</Caption>
          <Caption $x={439} $y={241}>{"Source\nSensor"}</Caption>
          <Caption $x={621} $y={243}>{"Three-Phase\nTransmission Line"}</Caption>
          <Caption $x={802} $y={241}>{"Load\nSensor"}</Caption>
          <Caption $x={367} $y={287} $align="right">Ph. A</Caption>
          <Caption $x={367} $y={343} $align="right">Ph B</Caption>
          <Caption $x={367} $y={400} $align="right">Ph C</Caption>
          <Caption $x={340} $y={422} $s={11}>Z</Caption>
          {[["A", "a", 287], ["B", "b", 343], ["C", "c", 399]].map(([u, l, y]) => (
            <React.Fragment key={u}>
              <Caption $x={427} $y={y}>{u}</Caption>
              <Caption $x={451} $y={y}>{l}</Caption>
              <Caption $x={790} $y={y}>{u}</Caption>
              <Caption $x={813} $y={y}>{l}</Caption>
            </React.Fragment>
          ))}
          {ports.map(([t, x, y], i) => <PortText key={i} $x={x} $y={y}>{t}</PortText>)}
          {vports.map(([t, x, y], i) => <PortText key={i} $x={x} $y={y} $v>{t}</PortText>)}
          <PortText $x={1113} $y={685}>n</PortText>
          <Caption $x={312} $y={671}>Source Line Voltage</Caption>
          <Caption $x={1113} $y={697} $s={11.2}>Wye-Connected Load</Caption>
          <Caption $x={1412} $y={705} $s={11.2}>Delta-Connected Load</Caption>
          <Caption $x={1041} $y={811}>Calculations</Caption>
          <Caption $x={1155} $y={768} $s={11} $lh={14} $align="left">{"Source Line\nVoltage"}</Caption>
          <Caption $x={1182} $y={832} $s={11} $lh={14}>{"Load Line\nVoltage"}</Caption>
          <Caption $x={1272} $y={860} $s={11}>Scope</Caption>
        </Canvas>
      </Main>

      <Status>
        <span>Ready</span>
        <StatusMid>72%</StatusMid>
        <StatusEnd>auto(ode14x)</StatusEnd>
      </Status>
      <BottomEdge />
      <PointerIcon x={90} y={143} />
      <PointerIcon x={791} y={85} />
    </Root>
  );
}
